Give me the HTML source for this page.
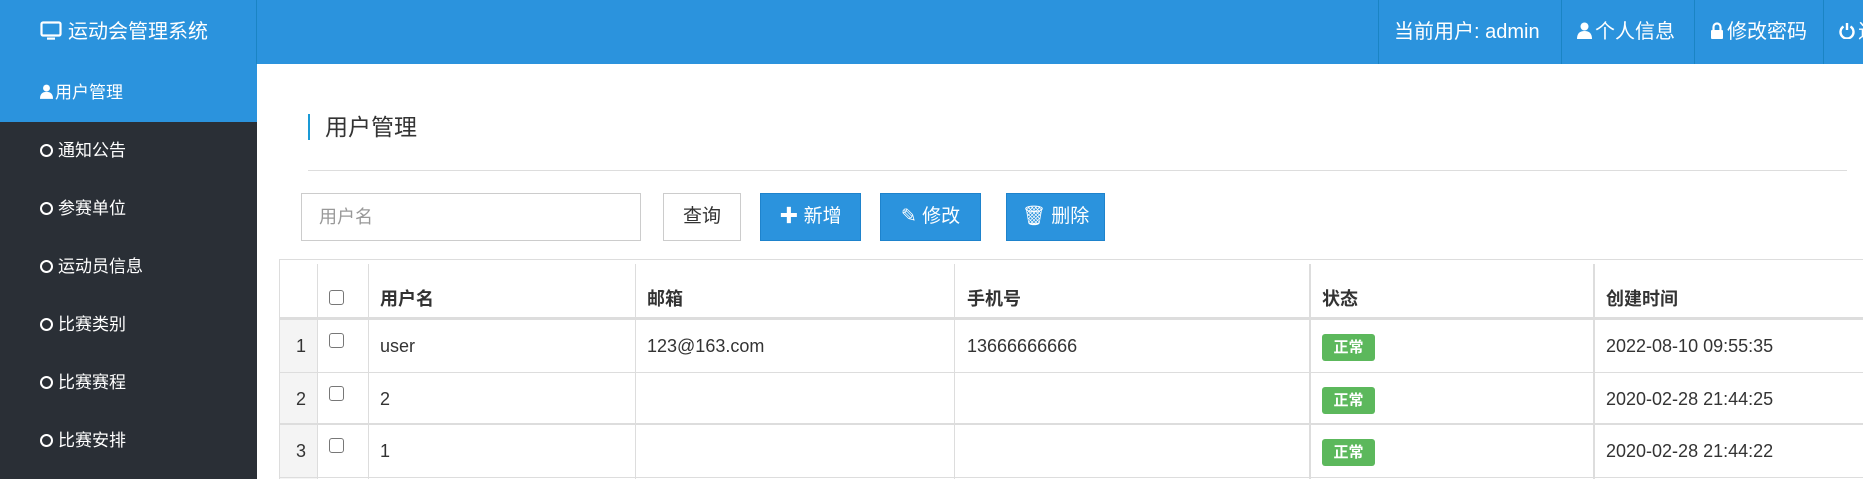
<!DOCTYPE html>
<html><head><meta charset="utf-8"><style>
*{box-sizing:border-box;margin:0;padding:0}
body{width:1863px;height:479px;overflow:hidden;background:#fff;font-family:"Liberation Sans","Noto Sans CJK SC",sans-serif;color:#333;position:relative}
.a{position:absolute}
.hdr{left:0;top:0;width:1863px;height:64px;background:#2b93dd}
.side{left:0;top:64px;width:257px;height:415px;background:#2a2f36}
.logo{left:0;top:0;width:257px;height:64px;border-right:1px solid #1a84c4;color:#fff;font-size:20px;line-height:64px;padding-left:40px}
.nav{left:0;width:257px;height:58px;color:#fff;font-size:17px;line-height:58px;padding-left:40px}
.ring{display:inline-block;width:13px;height:13px;border:2.5px solid #fff;border-radius:50%;vertical-align:-1px;margin-right:5px}
.hi{top:0;height:64px;color:#fff;font-size:20px;line-height:64px;border-left:1px solid #1a84c4;padding-left:15px;white-space:nowrap}
.hi svg{margin-right:3px}
.btn{top:193px;height:48px;line-height:46px;font-size:19px;text-align:center;color:#fff;background:#2b93dd;border:1px solid #1e83cc}
.th{font-weight:bold;font-size:18px}
.row{left:280px;width:1583px;border-top:1px solid #ddd}
.vl{width:1px;background:#ddd}
.t{font-size:18px}
.bd{left:1322px;width:53px;height:27px;background:#5cb85c;border-radius:3px;color:#fff;font-weight:bold;font-size:15px;line-height:27px;text-align:center}
.cb{left:329px;width:15px;height:15px;border:1px solid #777;border-radius:3px;background:#fff}
</style></head><body>
<div class="a hdr"></div>
<div class="a logo"><svg width="22" height="20" viewBox="0 0 22 20" style="vertical-align:-3px;margin-right:6px"><rect x="1.5" y="1.5" width="19" height="13" rx="1.5" fill="none" stroke="#fff" stroke-width="2.2"/><rect x="7" y="16.5" width="8" height="2.2" fill="#fff"/></svg>运动会管理系统</div>
<div class="a hi" style="left:1378px;width:183px">当前用户: admin</div>
<div class="a hi" style="left:1561px;width:133px"><svg width="15" height="17" viewBox="0 0 15 17" style="vertical-align:-1px"><circle cx="7.5" cy="4.5" r="4" fill="#fff"/><path d="M0 17 Q0 9 7.5 9 Q15 9 15 17Z" fill="#fff"/></svg>个人信息</div>
<div class="a hi" style="left:1694px;width:129px"><svg width="14" height="17" viewBox="0 0 14 17" style="vertical-align:-1px"><path d="M3.5 8V5a3.5 3.5 0 0 1 7 0v3" fill="none" stroke="#fff" stroke-width="2.2"/><rect x="1" y="8" width="12" height="9" rx="1" fill="#fff"/></svg>修改密码</div>
<div class="a hi" style="left:1823px;width:60px"><svg width="16" height="17" viewBox="0 0 16 17" style="vertical-align:-1px"><path d="M4.5 4.5A6.5 6.5 0 1 0 11.5 4.5" fill="none" stroke="#fff" stroke-width="2.4"/><path d="M8 1v7" stroke="#fff" stroke-width="2.4"/></svg>退</div>
<div class="a side"></div>
<div class="a nav" style="top:64px;background:#2b93dd"><svg width="13" height="15" viewBox="0 0 15 17" style="vertical-align:-1px;margin-right:2px"><circle cx="7.5" cy="4.5" r="4" fill="#fff"/><path d="M0 17 Q0 9 7.5 9 Q15 9 15 17Z" fill="#fff"/></svg>用户管理</div>
<div class="a nav" style="top:122px"><span class="ring"></span>通知公告</div>
<div class="a nav" style="top:180px"><span class="ring"></span>参赛单位</div>
<div class="a nav" style="top:238px"><span class="ring"></span>运动员信息</div>
<div class="a nav" style="top:296px"><span class="ring"></span>比赛类别</div>
<div class="a nav" style="top:354px"><span class="ring"></span>比赛赛程</div>
<div class="a nav" style="top:412px"><span class="ring"></span>比赛安排</div>
<div class="a" style="left:308px;top:114px;width:2px;height:26px;background:#1a9ad6"></div>
<div class="a" style="left:325px;top:112px;font-size:23px;line-height:30px">用户管理</div>
<div class="a" style="left:308px;top:170px;width:1539px;height:1px;background:#ddd"></div>
<div class="a" style="left:301px;top:193px;width:340px;height:48px;border:1px solid #ccc;font-size:18px;line-height:46px;padding-left:17px;color:#999">用户名</div>
<div class="a btn" style="left:663px;width:78px;background:#fff;color:#333;border-color:#ccc">查询</div>
<div class="a btn" style="left:760px;width:101px">✚ 新增</div>
<div class="a btn" style="left:880px;width:101px">✎ 修改</div>
<div class="a btn" style="left:1006px;width:99px">🗑 删除</div>
<!-- table -->
<div class="a" style="left:279px;top:259px;width:1584px;height:220px;border:1px solid #ddd;border-right:none;border-bottom:none"></div>
<div class="a" style="left:280px;top:319px;width:37px;height:160px;background:#f4f4f4"></div>
<div class="a" style="left:280px;top:317px;width:1583px;height:3px;background:#ddd"></div>
<div class="a row" style="top:372px"></div>
<div class="a row" style="top:423px;border-top:2px solid #ddd"></div>
<div class="a row" style="top:477px"></div>
<div class="a vl" style="left:317px;top:264px;height:215px"></div>
<div class="a vl" style="left:368px;top:264px;height:215px"></div>
<div class="a vl" style="left:635px;top:264px;height:215px"></div>
<div class="a vl" style="left:954px;top:264px;height:215px"></div>
<div class="a vl" style="left:1309px;top:264px;height:215px;width:2px"></div>
<div class="a vl" style="left:1593px;top:264px;height:215px;width:2px"></div>
<div class="a cb" style="top:290px"></div>
<div class="a th" style="left:380px;top:285px">用户名</div>
<div class="a th" style="left:647px;top:285px">邮箱</div>
<div class="a th" style="left:967px;top:285px">手机号</div>
<div class="a th" style="left:1322px;top:285px">状态</div>
<div class="a th" style="left:1606px;top:285px">创建时间</div>
<div class="a t" style="left:296px;top:336px">1</div>
<div class="a cb" style="top:333px"></div>
<div class="a t" style="left:380px;top:336px">user</div>
<div class="a t" style="left:647px;top:336px">123@163.com</div>
<div class="a t" style="left:967px;top:336px">13666666666</div>
<div class="a bd" style="top:334px">正常</div>
<div class="a t" style="left:1606px;top:336px">2022-08-10 09:55:35</div>
<div class="a t" style="left:296px;top:389px">2</div>
<div class="a cb" style="top:386px"></div>
<div class="a t" style="left:380px;top:389px">2</div>
<div class="a bd" style="top:387px">正常</div>
<div class="a t" style="left:1606px;top:389px">2020-02-28 21:44:25</div>
<div class="a t" style="left:296px;top:441px">3</div>
<div class="a cb" style="top:438px"></div>
<div class="a t" style="left:380px;top:441px">1</div>
<div class="a bd" style="top:439px">正常</div>
<div class="a t" style="left:1606px;top:441px">2020-02-28 21:44:22</div>
</body></html>
